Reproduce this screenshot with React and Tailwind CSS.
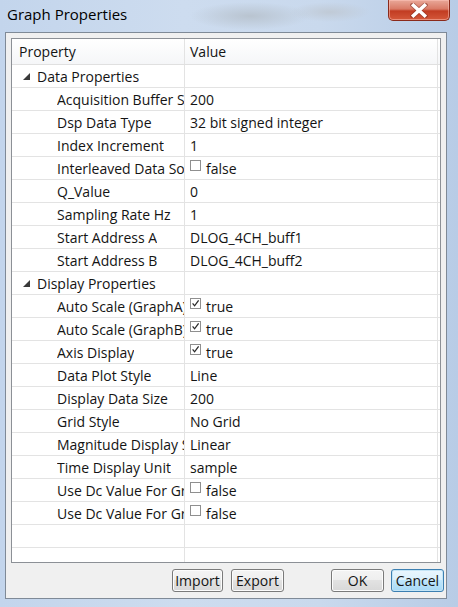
import React from "react";

const dataRows = [
  ["Acquisition Buffer Size", "200"],
  ["Dsp Data Type", "32 bit signed integer"],
  ["Index Increment", "1"],
  ["Interleaved Data Sources", "false", "box"],
  ["Q_Value", "0"],
  ["Sampling Rate Hz", "1"],
  ["Start Address A", "DLOG_4CH_buff1"],
  ["Start Address B", "DLOG_4CH_buff2"],
];

const displayRows = [
  ["Auto Scale (GraphA)", "true", "checked"],
  ["Auto Scale (GraphB)", "true", "checked"],
  ["Axis Display", "true", "checked"],
  ["Data Plot Style", "Line"],
  ["Display Data Size", "200"],
  ["Grid Style", "No Grid"],
  ["Magnitude Display Scale", "Linear"],
  ["Time Display Unit", "sample"],
  ["Use Dc Value For Graph A", "false", "box"],
  ["Use Dc Value For Graph B", "false", "box"],
];

function Box({ checked }) {
  return (
    <span className="self-start mt-[3px] mr-[5px] w-[11px] h-[11px] shrink-0 border border-[#8f8f8f] bg-white flex items-center justify-center">
      {checked && (
        <svg width="9" height="9" viewBox="0 0 9 9">
          <path d="M1.6 4.4 L3.6 6.8 L7.6 1.4" stroke="#2a2a2a" strokeWidth="1.3" fill="none" />
        </svg>
      )}
    </span>
  );
}

function Row({ name, value, kind }) {
  return (
    <div className="flex h-[23px] border-b border-[#e3e3e3] shrink-0">
      <div className="w-[173px] shrink-0 border-r border-[#e3e3e3] pl-[45px] flex items-center overflow-hidden whitespace-nowrap">
        <span className="block min-w-0 overflow-hidden">{name}</span>
      </div>
      <div className="w-[253px] shrink-0 border-r border-[#e3e3e3] pl-[5px] flex items-center whitespace-nowrap overflow-hidden">
        {kind && <Box checked={kind === "checked"} />}
        <span>{value}</span>
      </div>
    </div>
  );
}

function Group({ name }) {
  return (
    <div className="flex h-[23px] border-b border-[#e3e3e3] shrink-0">
      <div className="w-[173px] shrink-0 border-r border-[#e3e3e3] pl-[11px] flex items-center whitespace-nowrap">
        <svg width="7" height="7" viewBox="0 0 7 7" className="mr-[7px] mt-[1px]">
          <polygon points="0,7 7,7 7,0" fill="#3a3a3a" />
        </svg>
        {name}
      </div>
      <div className="w-[253px] shrink-0 border-r border-[#e3e3e3]" />
    </div>
  );
}

function Btn({ children, w, primary, className = "" }) {
  return (
    <div
      className={
        "h-[23px] rounded-[3px] border flex items-center justify-center text-[14px] " +
        (primary
          ? "border-[#3c7fb1] bg-[linear-gradient(#eaf6fd,#d9f0fc_50%,#bee6fd_50%,#a7d9f5)] shadow-[inset_0_0_0_1px_#c4e5f6] "
          : "border-[#7a7a7a] bg-[linear-gradient(#f4f4f4,#eeeeee_50%,#e2e2e2_50%,#d8d8d8)] shadow-[inset_0_0_0_1px_#fcfcfc] ") +
        className
      }
      style={{ width: w }}
    >
      {children}
    </div>
  );
}

export default function App() {
  return (
    <div className="w-[458px] h-[607px] flex flex-col overflow-hidden bg-[linear-gradient(90deg,#c3d5ec,#cddcef_40%,#c9d9ed_70%,#b8cce6)] font-['Open_Sans','Noto_Sans',sans-serif] text-[#141414] text-[14px]">
      {/* title bar */}
      <div className="h-[32px] shrink-0 flex items-start bg-[radial-gradient(ellipse_60px_14px_at_250px_16px,#b9c4d0,transparent),radial-gradient(ellipse_40px_10px_at_330px_12px,#c0cad6,transparent)]">
        <div className="pl-[7px] pt-[4px] text-[15px] text-black leading-[20px]">Graph Properties</div>
        <div className="ml-auto mr-[8px] w-[62px] h-[21px] rounded-b-[5px] border border-t-0 border-[#8a2a1b] bg-[linear-gradient(#e9a899,#d97a66_45%,#c23c22_55%,#d4583a)] flex items-center justify-center shadow-[inset_0_0_0_1px_rgba(255,200,190,0.5)]">
          <svg width="18" height="15" viewBox="0 0 18 15">
            <path d="M3 2 L15 13 M15 2 L3 13" stroke="#7a2a1e" strokeWidth="5" strokeLinecap="square" opacity="0.5" />
            <path d="M3.5 2.5 L14.5 12.5 M14.5 2.5 L3.5 12.5" stroke="#ffffff" strokeWidth="3.6" strokeLinecap="square" />
          </svg>
        </div>
      </div>

      {/* client */}
      <div className="flex-1 ml-[5px] mr-[11px] mb-[8px] border border-[#7f8a97] bg-[#f0f0f0] flex flex-col">
        <div className="flex-1 mx-[5px] mt-[5px] border border-[#8c9096] bg-white flex flex-col overflow-hidden">
          {/* header */}
          <div className="flex h-[26px] shrink-0 border-b border-[#e0e0e0] bg-[linear-gradient(#ffffff,#f5f6f8)]">
            <div className="w-[173px] shrink-0 border-r border-[#e3e3e3] pl-[7px] flex items-center">Property</div>
            <div className="w-[253px] shrink-0 border-r border-[#e3e3e3] pl-[5px] flex items-center">Value</div>
          </div>
          <Group name="Data Properties" />
          {dataRows.map((r) => (
            <Row key={r[0]} name={r[0]} value={r[1]} kind={r[2]} />
          ))}
          <Group name="Display Properties" />
          {displayRows.map((r) => (
            <Row key={r[0]} name={r[0]} value={r[1]} kind={r[2]} />
          ))}
          <div className="flex h-[23px] border-b border-[#e3e3e3] shrink-0">
            <div className="w-[173px] shrink-0 border-r border-[#e3e3e3]" />
            <div className="w-[253px] shrink-0 border-r border-[#e3e3e3]" />
          </div>
          <div className="flex flex-1">
            <div className="w-[173px] shrink-0 border-r border-[#e3e3e3]" />
            <div className="w-[253px] shrink-0 border-r border-[#e3e3e3]" />
          </div>
        </div>
        {/* buttons */}
        <div className="h-[35px] shrink-0 flex items-center">
          <Btn w={51} className="ml-[166px]">Import</Btn>
          <Btn w={53} className="ml-[8px]">Export</Btn>
          <Btn w={53} className="ml-[47px]">OK</Btn>
          <Btn w={53} className="ml-[7px]" primary>Cancel</Btn>
        </div>
      </div>
    </div>
  );
}
